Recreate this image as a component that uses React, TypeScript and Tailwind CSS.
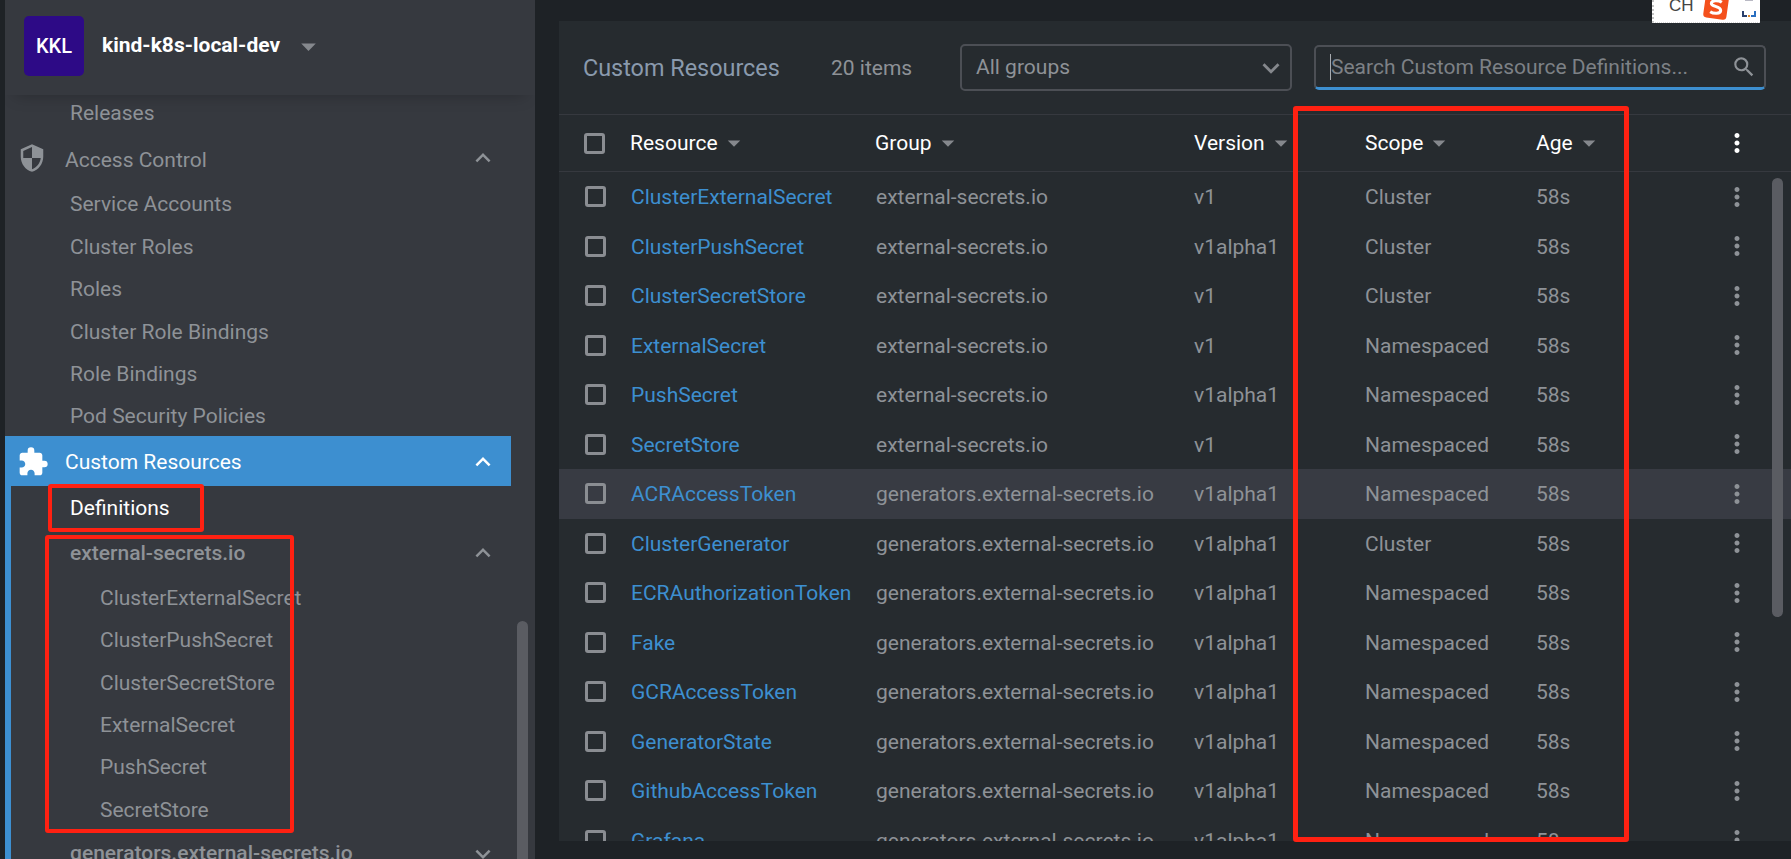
import { MdSecurity, MdExtension, MdKeyboardArrowUp, MdKeyboardArrowDown, MdMoreVert, MdSearch, MdArrowDropDown } from "react-icons/md";

const roboto = "font-['Roboto',sans-serif]";

const accessItems = ["Service Accounts", "Cluster Roles", "Roles", "Cluster Role Bindings", "Role Bindings", "Pod Security Policies"];
const externalItems = ["ClusterExternalSecret", "ClusterPushSecret", "ClusterSecretStore", "ExternalSecret", "PushSecret", "SecretStore"];

const rows = [
  ["ClusterExternalSecret", "external-secrets.io", "v1", "Cluster"],
  ["ClusterPushSecret", "external-secrets.io", "v1alpha1", "Cluster"],
  ["ClusterSecretStore", "external-secrets.io", "v1", "Cluster"],
  ["ExternalSecret", "external-secrets.io", "v1", "Namespaced"],
  ["PushSecret", "external-secrets.io", "v1alpha1", "Namespaced"],
  ["SecretStore", "external-secrets.io", "v1", "Namespaced"],
  ["ACRAccessToken", "generators.external-secrets.io", "v1alpha1", "Namespaced"],
  ["ClusterGenerator", "generators.external-secrets.io", "v1alpha1", "Cluster"],
  ["ECRAuthorizationToken", "generators.external-secrets.io", "v1alpha1", "Namespaced"],
  ["Fake", "generators.external-secrets.io", "v1alpha1", "Namespaced"],
  ["GCRAccessToken", "generators.external-secrets.io", "v1alpha1", "Namespaced"],
  ["GeneratorState", "generators.external-secrets.io", "v1alpha1", "Namespaced"],
  ["GithubAccessToken", "generators.external-secrets.io", "v1alpha1", "Namespaced"],
  ["Grafana", "generators.external-secrets.io", "v1alpha1", "Namespaced"],
];

function HeaderCell({ label, className }: { label: string; className: string }) {
  return (
    <div className={`flex items-center text-white ${className}`}>
      <span className="pt-[2px]">{label}</span>
      <MdArrowDropDown className="ml-[1px] text-[30px] text-[#85888d]" />
    </div>
  );
}

function Checkbox() {
  return <div className="h-[21px] w-[21px] rounded-[3px] border-[3px] border-[#8a8d92]" />;
}

function SubItem({ label, deep, active }: { label: string; deep?: boolean; active?: boolean }) {
  return (
    <div className={`flex h-[42.4px] items-center pt-[2px] ${deep ? "pl-[89px]" : "pl-[59px]"} ${active ? "text-white" : "text-[#8e9297]"}`}>
      {label}
    </div>
  );
}

function Sidebar() {
  return (
    <aside className="relative flex w-[530px] shrink-0 flex-col overflow-hidden bg-[#36393f]">
      <div className="z-10 flex h-[95px] shrink-0 items-center bg-[#36393f] pb-[3px] pl-[19px] shadow-[0_10px_15px_-10px_rgba(0,0,0,0.25)]">
        <div className="flex h-[60px] w-[60px] items-center justify-center rounded-[5px] bg-[#2d0a86] text-[20px] font-medium text-white">KKL</div>
        <span className="ml-[18px] text-[21px] font-bold text-white">kind-k8s-local-dev</span>
        <MdArrowDropDown className="ml-[11px] text-[35px] text-[#85888d]" />
      </div>
      <div className="flex h-[35px] shrink-0 items-center pl-[65px] pt-[2px] text-[#8e9297]">Releases</div>
      <div className="mt-[2px] flex h-[50px] shrink-0 items-center pt-[2px] text-[#8e9297]">
        <MdSecurity className="ml-[12px] text-[30px] text-[#8e9297]" />
        <span className="ml-[18px] pt-[5px]">Access Control</span>
        <MdKeyboardArrowUp className="ml-auto mr-[37px] text-[30px]" />
      </div>
      <div className="h-[254.4px] shrink-0 pl-[6px] pt-[1px]">
        {accessItems.map((item) => (
          <SubItem key={item} label={item} />
        ))}
      </div>
      <div className="flex h-[50px] w-[506px] shrink-0 items-center bg-[#3d8fd0] pt-[1px] text-white">
        <MdExtension className="ml-[12px] text-[32px]" />
        <span className="ml-[16px] pt-[2px]">Custom Resources</span>
        <MdKeyboardArrowUp className="ml-auto mr-[13px] text-[30px]" />
      </div>
      <div className="flex-1 border-l-[6px] border-[#3d8fd0]">
        <SubItem label="Definitions" active />
        <div className="flex h-[47.5px] items-center pl-[59px] font-medium text-[#8e9297]">
          <span className="pt-[2px]">external-secrets.io</span>
          <MdKeyboardArrowUp className="ml-auto mr-[37px] text-[30px]" />
        </div>
        {externalItems.map((item) => (
          <SubItem key={item} label={item} deep />
        ))}
        <div className="flex h-[46px] items-center pl-[59px] font-medium text-[#8e9297]">
          generators.external-secrets.io
          <MdKeyboardArrowDown className="ml-auto mr-[37px] text-[30px]" />
        </div>
      </div>
      <div className="absolute left-[512px] top-[621px] h-[300px] w-[11px] rounded-full bg-[#5a5c62]" />
    </aside>
  );
}

function ResourceTable() {
  return (
    <section className="relative flex min-w-0 flex-1 flex-col overflow-hidden bg-[#262b2f]">
      <div className="flex h-[94px] shrink-0 items-center border-b border-[#36393f] pl-[24px]">
        <h1 className="w-[248px] pt-[2px] text-[23.4px] text-[#8a9aad]">Custom Resources</h1>
        <span className="w-[129px] pt-[2px] text-[#8e9297]">20 items</span>
        <div className="flex h-[47px] w-[332px] items-center justify-between rounded-[5px] border-2 border-[#4c4f55] pl-[14px] pr-[2px] text-[#8e9297]">
          All groups
          <MdKeyboardArrowDown className="text-[34px] text-[#85888d]" />
        </div>
        <div className="ml-[22px] flex h-[45px] w-[452px] items-center rounded-[5px] border-2 border-b-[3px] border-[#4c4f55] border-b-[#3d8fd0] pl-[14px] pr-[7px] text-[#7d8186]">
          <span className="h-[26px] w-px bg-[#a8abb0]" />
          <span className="pt-[2px]">Search Custom Resource Definitions...</span>
          <MdSearch className="ml-auto text-[26px] text-[#8e9297]" />
        </div>
      </div>
      <div className="flex h-[57px] shrink-0 items-center border-b border-[#36393f] pl-[25px]">
        <Checkbox />
        <HeaderCell label="Resource" className="ml-[25px] w-[245px]" />
        <HeaderCell label="Group" className="w-[319px]" />
        <HeaderCell label="Version" className="w-[171px]" />
        <HeaderCell label="Scope" className="w-[171px]" />
        <HeaderCell label="Age" className="w-[186px]" />
        <MdMoreVert className="text-[30px] text-white" />
      </div>
      <div className="relative min-h-0 flex-1 overflow-hidden">
        {rows.map(([name, group, version, scope]) => (
          <div key={name} className={`flex h-[49.5px] items-center pl-[26px] ${name === "ACRAccessToken" ? "bg-[#383b43]" : ""}`}>
            <Checkbox />
            <span className="ml-[25px] w-[245px] pt-[2px] text-[#3d8fd0]">{name}</span>
            <span className="w-[318px] pt-[2px] text-[#8e9297]">{group}</span>
            <span className="w-[171px] pt-[2px] text-[#8e9297]">{version}</span>
            <span className="w-[171px] pt-[2px] text-[#8e9297]">{scope}</span>
            <span className="w-[186px] pt-[2px] text-[#8e9297]">58s</span>
            <MdMoreVert className="text-[30px] text-[#8e9297]" />
          </div>
        ))}
        <div className="absolute left-[1213px] top-[6px] h-[439px] w-[11px] rounded-full bg-[#5a5c62]" />
      </div>
    </section>
  );
}

export default function App() {
  return (
    <div className={`relative flex h-[859px] w-[1791px] overflow-hidden bg-[#1e2226] pl-[5px] text-[21px] ${roboto}`}>
      <Sidebar />
      <main className="flex min-w-0 flex-1 pb-[18px] pl-[24px] pt-[21px]">
        <ResourceTable />
      </main>

      {/* annotation boxes drawn over the screenshot */}
      <div className="absolute left-[48px] top-[484px] h-[48px] w-[156px] rounded-[3px] border-4 border-[#ff2112]" />
      <div className="absolute left-[45px] top-[535px] h-[298px] w-[249px] rounded-[3px] border-4 border-[#ff2112]" />
      <div className="absolute left-[1293px] top-[106px] h-[736px] w-[336px] rounded-[3px] border-[5px] border-[#ff2112]" />

      {/* input method widget */}
      <div className="absolute left-[1652px] top-0 flex h-[23px] w-[108px] items-start overflow-hidden border-b border-l-2 border-b-[#d8d8d8] border-l-[#c4c4c4] border-dotted bg-white pl-[15px] font-['Liberation_Sans',sans-serif] text-[17px] leading-none text-[#444]">
        <span className="-mt-[3px]">CH</span>
        <svg viewBox="0 0 24 24" className="ml-[8px] h-[28px] w-[28px] shrink-0 -translate-y-[7px]">
          <rect x="2" y="2" width="20" height="20" rx="3" fill="#f4501c" transform="rotate(8 12 12)" />
          <path d="M17 8 C14 6 8 6 8 9 C8 12 16 11 16 15 C16 18 10 18 7 16" fill="none" stroke="#fff" strokeWidth="2.6" />
        </svg>
        <svg viewBox="0 0 14 22" className="ml-[12px] h-[22px] w-[14px] shrink-0">
          <path d="M3 0h8" fill="none" stroke="#b9b9c4" strokeWidth="2" />
          <path d="M1 11v5h4" fill="none" stroke="#2a3f6b" strokeWidth="2" />
          <path d="M13 11v5h-4" fill="none" stroke="#2a6fc0" strokeWidth="2" />
          <path d="M6 16h2" stroke="#e08a2a" strokeWidth="2" />
        </svg>
      </div>
    </div>
  );
}
